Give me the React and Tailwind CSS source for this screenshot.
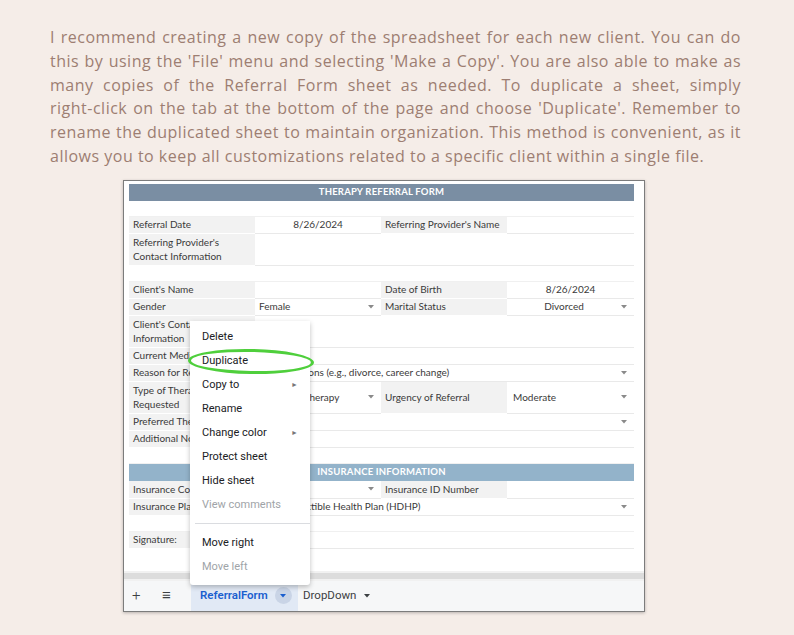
import React from "react";

const Arrow = ({ color = "#8a8a8a" }) => (
  <svg width="6" height="4" viewBox="0 0 6 4" className="shrink-0">
    <polygon points="0,0 6,0 3,3.5" fill={color} />
  </svg>
);

const Cell = ({ children, label, center, drop, span, className = "" }) => (
  <div
    className={`flex items-center px-[4px] border-b border-[#e9e9e9] overflow-hidden ${
      label ? "bg-[#f2f2f2] border-white" : "bg-white"
    } ${span || ""} ${className}`}
  >
    <span className={`flex-1 whitespace-nowrap ${center ? "text-center" : ""}`}>{children}</span>
    {drop && (
      <span className="pr-[3px] pl-1">
        <Arrow />
      </span>
    )}
  </div>
);

const Row = ({ h = "h-[17px]", children }) => (
  <div className={`grid grid-cols-[126px_126px_126px_127px] ${h}`}>{children}</div>
);

const Blank = ({ h = "h-[16px]" }) => <div className={`${h} border-b border-[#f0f0f0]`} />;

const WrapLabel = ({ children }) => (
  <div className="bg-[#f2f2f2] border-b border-white px-[4px] flex items-center leading-[14px]">
    <span>{children}</span>
  </div>
);

const menu = [
  { t: "Delete" },
  { t: "Duplicate" },
  { t: "Copy to", sub: true },
  { t: "Rename" },
  { t: "Change color", sub: true },
  { t: "Protect sheet" },
  { t: "Hide sheet" },
  { t: "View comments", off: true },
];

const Paragraph = () => {
  const lines = [
    "I recommend creating a new copy of the spreadsheet for each new client. You can do",
    "this by using the 'File' menu and selecting 'Make a Copy'. You are also able to make as",
    "many copies of the Referral Form sheet as needed. To duplicate a sheet, simply",
    "right-click on the tab at the bottom of the page and choose 'Duplicate'. Remember to",
    "rename the duplicated sheet to maintain organization. This method is convenient, as it",
  ];
  return (
    <div className="pl-[50px] pr-[53px] pt-[26px] text-[16px] leading-[23.8px] tracking-[0.5px] text-[#9d7e72] font-['Open_Sans',sans-serif]">
      {lines.map((l) => (
        <div key={l} className="whitespace-nowrap text-justify [text-align-last:justify]">
          {l}
        </div>
      ))}
      <div className="whitespace-nowrap">
        allows you to keep all customizations related to a specific client within a single file.
      </div>
    </div>
  );
};

export default function App() {
  return (
    <div className="w-[794px] h-[635px] bg-[#f5ede8] overflow-hidden">
      <Paragraph />

      <div className="relative mt-[11px] ml-[123px] w-[522px] h-[432px] border border-[#7c7c7c] bg-white shadow-[0_1px_3px_rgba(0,0,0,0.25)] flex flex-col">
        <div className="pl-[5px] pr-[10px] pt-[3px] flex-1 text-[10px] text-[#3a3a3a] font-['Lato',sans-serif]">
          <div className="h-[17px] bg-[#7a8ea3] flex items-center justify-center text-white font-bold text-[9.5px] tracking-[0.2px]">
            THERAPY REFERRAL FORM
          </div>
          <Blank />
          <Row>
            <Cell label>Referral Date</Cell>
            <Cell center>8/26/2024</Cell>
            <Cell label>Referring Provider's Name</Cell>
            <Cell />
          </Row>
          <Row h="h-[32px]">
            <WrapLabel>
              Referring Provider's
              <br />
              Contact Information
            </WrapLabel>
            <Cell span="col-span-3" />
          </Row>
          <Blank />
          <Row>
            <Cell label>Client's Name</Cell>
            <Cell />
            <Cell label>Date of Birth</Cell>
            <Cell center>8/26/2024</Cell>
          </Row>
          <Row>
            <Cell label>Gender</Cell>
            <Cell drop>Female</Cell>
            <Cell label>Marital Status</Cell>
            <Cell center drop>
              Divorced
            </Cell>
          </Row>
          <Row h="h-[32px]">
            <WrapLabel>
              Client's Contact
              <br />
              Information
            </WrapLabel>
            <Cell span="col-span-3" />
          </Row>
          <Row>
            <Cell label>Current Medications</Cell>
            <Cell span="col-span-3" />
          </Row>
          <Row>
            <Cell label>Reason for Referral</Cell>
            <Cell span="col-span-3" drop>
              Life transitions (e.g., divorce, career change)
            </Cell>
          </Row>
          <Row h="h-[32px]">
            <WrapLabel>
              Type of Therapy
              <br />
              Requested
            </WrapLabel>
            <Cell drop>Individual Therapy</Cell>
            <Cell label>Urgency of Referral</Cell>
            <Cell drop className="pl-[6px]">
              Moderate
            </Cell>
          </Row>
          <Row>
            <Cell label>Preferred Therapist</Cell>
            <Cell span="col-span-3" drop />
          </Row>
          <Row>
            <Cell label>Additional Notes</Cell>
            <Cell span="col-span-3" />
          </Row>
          <Blank />
          <div className="h-[17px] bg-[#93b3ca] flex items-center justify-center text-white font-bold text-[9.5px] tracking-[0.2px]">
            INSURANCE INFORMATION
          </div>
          <Row h="h-[18px]">
            <Cell label>Insurance Company</Cell>
            <Cell drop />
            <Cell label>Insurance ID Number</Cell>
            <Cell />
          </Row>
          <Row>
            <Cell label>Insurance Plan</Cell>
            <Cell span="col-span-3" drop>
              High Deductible Health Plan (HDHP)
            </Cell>
          </Row>
          <Blank />
          <Row>
            <Cell label>Signature:</Cell>
            <Cell span="col-span-3" />
          </Row>
        </div>

        <div className="h-[10px] bg-[#f1f1f1] flex items-center">
          <div className="h-[6px] w-full bg-[#dcdcdc]" />
        </div>

        <div className="h-[30px] bg-[#f6f7f8] flex items-center text-[11.5px] font-['Roboto',sans-serif] text-[#3c4043]">
          <span className="w-[26px] pl-[8px] text-[15px] leading-none font-light">+</span>
          <span className="ml-[12px] w-[20px] text-[15px] leading-none">≡</span>
          <div className="ml-[9px] h-full w-[107px] bg-[#e1e9f5] flex items-center pl-[9px] gap-[7px]">
            <span className="text-[#1b5fcf] font-semibold">ReferralForm</span>
            <span className="w-[17px] h-[17px] rounded-full bg-[#c9d4e6] flex items-center justify-center">
              <Arrow color="#1b5fcf" />
            </span>
          </div>
          <div className="ml-[5px] flex items-center gap-[8px]">
            <span>DropDown</span>
            <Arrow color="#3c4043" />
          </div>
        </div>

        {/* context menu */}
        <div className="absolute left-[66px] top-[140px] w-[120px] bg-white rounded-b-[3px] shadow-[0_2px_5px_rgba(0,0,0,0.25)] pt-[4px] pb-[6px] font-['Roboto',sans-serif] text-[11px] text-[#202124]">
          {menu.map((m) => (
            <div key={m.t} className="h-[24px] flex items-center justify-between pl-[12px] pr-[12px]">
              <span className={m.off ? "text-[#a0a4a8]" : ""}>{m.t}</span>
              {m.sub && <span className="text-[7px] text-[#777]">►</span>}
            </div>
          ))}
          <div className="h-[14px] flex items-center">
            <div className="h-px w-full bg-[#dadce0] ml-[5px]" />
          </div>
          <div className="h-[24px] flex items-center pl-[12px]">Move right</div>
          <div className="h-[24px] flex items-center pl-[12px] text-[#a0a4a8]">Move left</div>
        </div>

        {/* highlight ring */}
        <div className="absolute left-[64px] top-[168px] w-[126px] h-[25px] rounded-[50%] border-[3px] border-[#4fcf3c] rotate-[1deg]" />
      </div>
    </div>
  );
}
